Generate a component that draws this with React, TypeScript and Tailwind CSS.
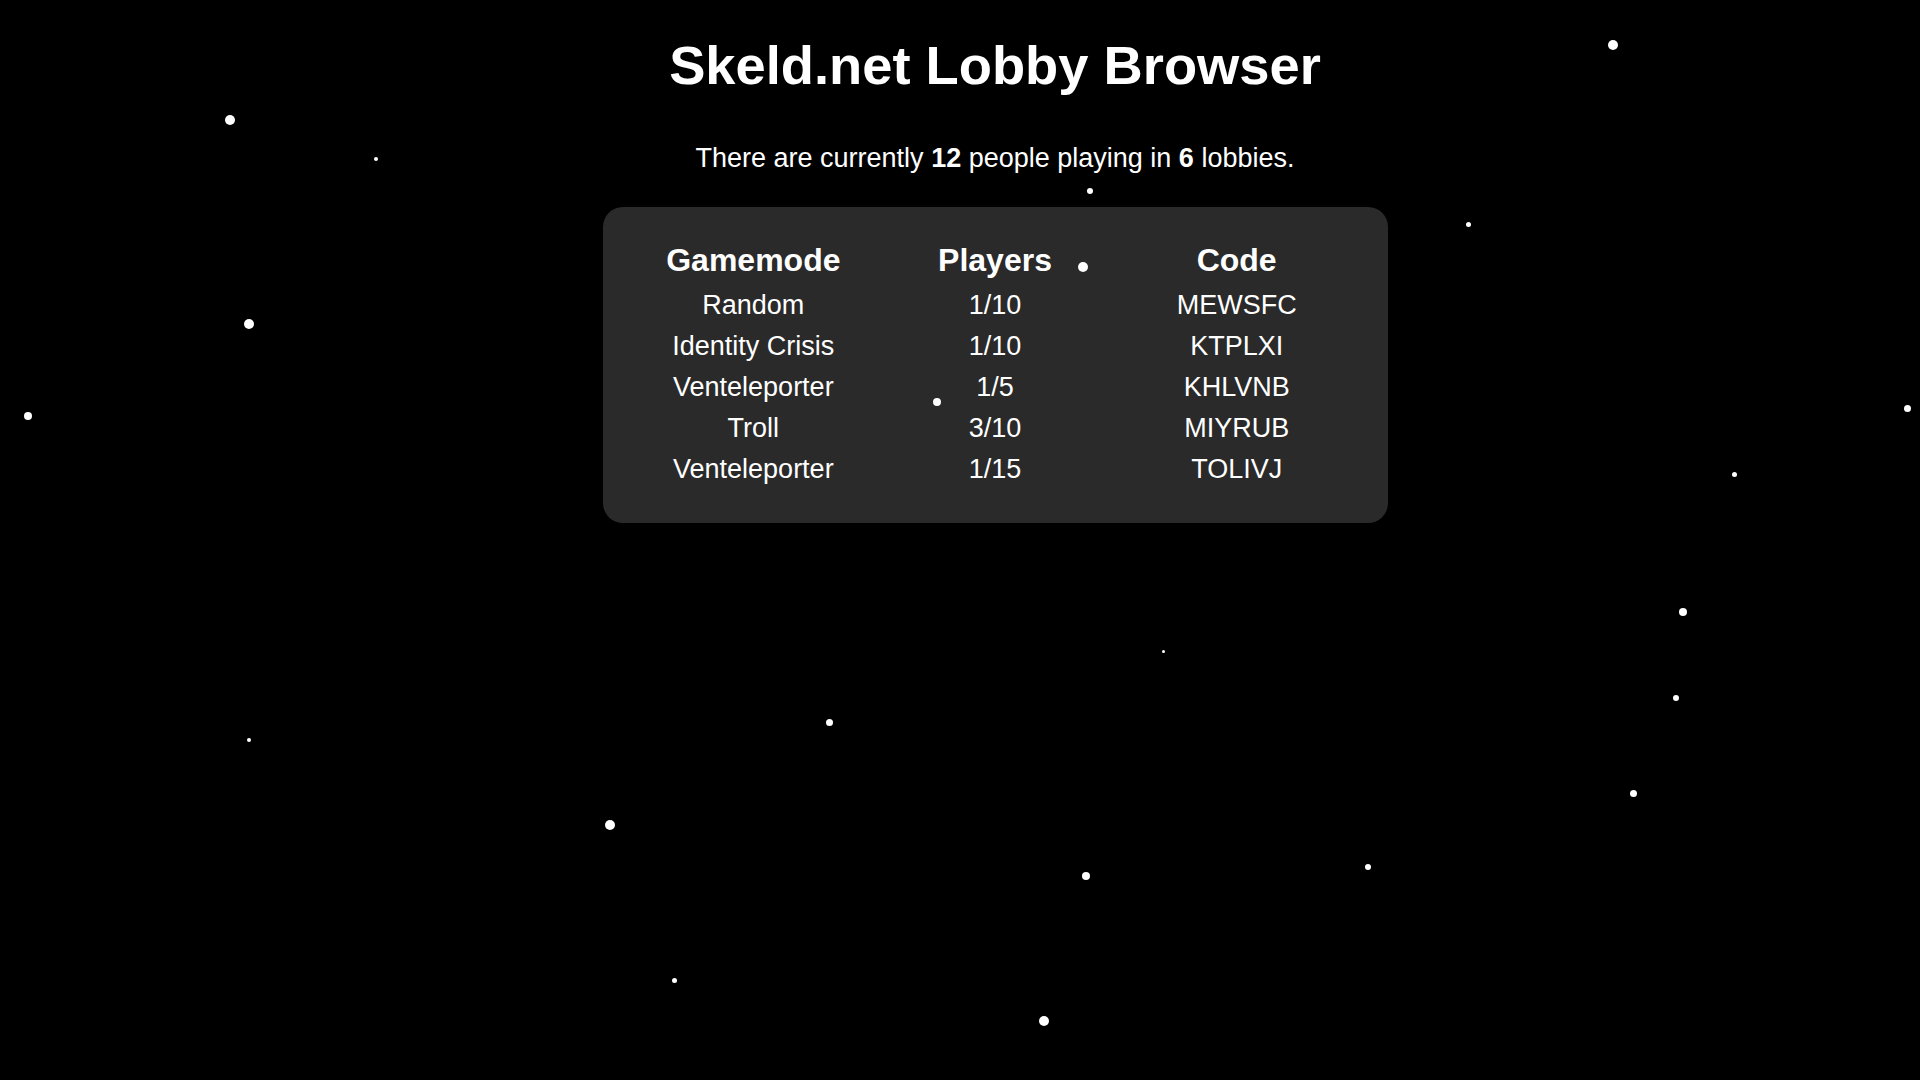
import React from "react";

interface Lobby { mode: string; players: string; code: string; }
interface Star { x: number; y: number; d: number; }

const lobbies: Lobby[] = [
  { mode: "Random", players: "1/10", code: "MEWSFC" },
  { mode: "Identity Crisis", players: "1/10", code: "KTPLXI" },
  { mode: "Venteleporter", players: "1/5", code: "KHLVNB" },
  { mode: "Troll", players: "3/10", code: "MIYRUB" },
  { mode: "Venteleporter", players: "1/15", code: "TOLIVJ" },
];

// star centres, taken from the page at 1920x1080
const stars: Star[] = [
  { x: 1613, y: 45, d: 10 },
  { x: 230, y: 120, d: 10 },
  { x: 376, y: 159, d: 4 },
  { x: 1090, y: 191, d: 6 },
  { x: 1468, y: 224, d: 5 },
  { x: 1083, y: 267, d: 10 },
  { x: 249, y: 324, d: 10 },
  { x: 28, y: 416, d: 8 },
  { x: 1907, y: 408, d: 7 },
  { x: 937, y: 402, d: 8 },
  { x: 1734, y: 474, d: 5 },
  { x: 1683, y: 612, d: 8 },
  { x: 1163, y: 651, d: 3 },
  { x: 1676, y: 698, d: 6 },
  { x: 249, y: 740, d: 4 },
  { x: 829, y: 722, d: 7 },
  { x: 1633, y: 793, d: 7 },
  { x: 610, y: 825, d: 10 },
  { x: 1086, y: 876, d: 8 },
  { x: 1368, y: 867, d: 6 },
  { x: 674, y: 980, d: 5 },
  { x: 1044, y: 1021, d: 10 },
];

export default function App() {
  return (
    <div className="relative h-screen w-full overflow-hidden bg-black text-white font-['Liberation_Sans',Arial,sans-serif]">
      <div className="flex flex-col items-center pl-[70px]">
        <h1 className="mt-[35px] text-[54.3px] font-bold leading-[62px]">Skeld.net Lobby Browser</h1>
        <p className="mt-[46px] text-[27px] leading-[31px]">
          There are currently <b>12</b> people playing in <b>6</b> lobbies.
        </p>

        <div className="mt-[33px] w-[785px] rounded-[20px] bg-[#2a2a2a] px-[30px] pt-[29px] pb-[33px]">
          <div className="grid grid-cols-3 text-center">
            <div className="text-[32px] font-bold leading-[48.5px]">Gamemode</div>
            <div className="text-[32px] font-bold leading-[48.5px]">Players</div>
            <div className="text-[32px] font-bold leading-[48.5px]">Code</div>
            {lobbies.map((l) => (
              <React.Fragment key={l.code}>
                <div className="text-[27px] leading-[41px]">{l.mode}</div>
                <div className="text-[27px] leading-[41px]">{l.players}</div>
                <div className="text-[27px] leading-[41px]">{l.code}</div>
              </React.Fragment>
            ))}
          </div>
        </div>
      </div>

      <div className="pointer-events-none absolute inset-0">
        {stars.map((s, i) => (
          <div
            key={i}
            className="absolute rounded-full bg-white"
            style={{ left: s.x - s.d / 2, top: s.y - s.d / 2, width: s.d, height: s.d }}
          />
        ))}
      </div>
    </div>
  );
}
